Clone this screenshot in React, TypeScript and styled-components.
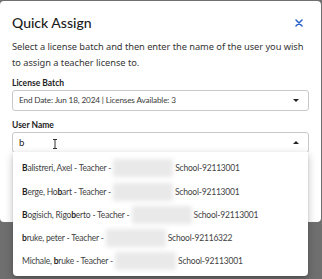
import React from "react";
import styled, { createGlobalStyle } from "styled-components";

const Global = createGlobalStyle`
  html, body { margin: 0; padding: 0; }
  body {
    background: #6f6f6f;
    width: 322px;
    height: 279px;
    overflow: hidden;
    font-family: Lato, "Open Sans", sans-serif;
  }
`;

const Backdrop = styled.div`
  width: 322px;
  height: 279px;
  padding-top: 1px;
  box-sizing: border-box;
  position: relative;
`;

const Dialog = styled.div`
  width: 321px;
  height: 221px;
  background: #ffffff;
  border-radius: 4px;
  box-sizing: border-box;
  padding: 12px 12px 0 12px;
  display: flex;
  flex-direction: column;
`;

const Header = styled.div`
  display: flex;
  align-items: center;
  justify-content: space-between;
  height: 20px;
  padding-right: 6px;
`;

const Title = styled.h2`
  margin: 0;
  font-size: 14px;
  font-weight: 500;
  color: #1b1b1b;
  line-height: 20px;
`;

const CloseButton = styled.button`
  border: 0;
  background: none;
  padding: 0;
  width: 9px;
  height: 9px;
  display: flex;
  align-items: center;
  justify-content: center;
  cursor: pointer;
`;

const Description = styled.p`
  margin: 6px 0 5px 0;
  font-family: "Noto Sans", Lato, sans-serif;
  font-size: 9.3px;
  letter-spacing: -0.05px;
  line-height: 16.3px;
  color: #353535;
`;

const Field = styled.div`
  display: flex;
  flex-direction: column;
  margin-bottom: 8px;
  position: relative;
`;

const Label = styled.label`
  font-size: 8.5px;
  font-weight: 700;
  line-height: 13px;
  color: #222;
`;

const Box = styled.div`
  height: 21px;
  border: 1px solid #c9c9c9;
  border-radius: 3px;
  box-sizing: border-box;
  display: flex;
  align-items: center;
  justify-content: space-between;
  padding: 0 9px 0 6px;
  font-size: 8.2px;
  letter-spacing: -0.15px;
  color: #3a3a3a;
  position: relative;
  background: #fff;
`;

const Caret = styled.span<{ $up?: boolean }>`
  width: 0;
  height: 0;
  border-left: 3px solid transparent;
  border-right: 3px solid transparent;
  ${(p) =>
    p.$up ? "border-bottom: 3.5px solid #222;" : "border-top: 3.5px solid #222;"}
`;

const TypedValue = styled.span`
  color: #222;
  font-size: 9.5px;
`;

const Cursor = styled.svg`
  position: absolute;
  left: 39px;
  top: 6px;
`;

const Menu = styled.ul`
  position: absolute;
  top: 100%;
  left: 0;
  right: 0;
  margin: 0;
  padding: 5px 0 3px 0;
  list-style: none;
  background: #fff;
  border-radius: 0 0 4px 4px;
  box-shadow: 0 3px 8px rgba(0, 0, 0, 0.25), 0 1px 2px rgba(0, 0, 0, 0.12);
  z-index: 2;
`;

const Option = styled.li`
  height: 23.3px;
  display: flex;
  align-items: center;
  padding-left: 9px;
  font-size: 8.5px;
  letter-spacing: -0.2px;
  color: #3f3f3f;
  white-space: nowrap;
`;

const OptionText = styled.span``;

const Match = styled.b`
  font-weight: 700;
  color: #1e1e1e;
`;

const Redacted = styled.span<{ $w: number }>`
  display: inline-block;
  width: ${(p) => p.$w}px;
  height: 18px;
  margin: 0 2px 0 2px;
  background: #e9e9e9;
  filter: blur(2px);
  border-radius: 2px;
`;

type Part = { t: string; b?: boolean };
const options: { parts: Part[]; w: number; school: string }[] = [
  { parts: [{ t: "B", b: true }, { t: "alistreri, Axel - Teacher -" }], w: 60, school: "School-92113001" },
  { parts: [{ t: "B", b: true }, { t: "erge, Ho" }, { t: "b", b: true }, { t: "art - Teacher -" }], w: 60, school: "School-92113001" },
  { parts: [{ t: "B", b: true }, { t: "ogisich, Rigo" }, { t: "b", b: true }, { t: "erto - Teacher -" }], w: 60, school: "School-92113001" },
  { parts: [{ t: "b", b: true }, { t: "ruke, peter - Teacher -" }], w: 60, school: "School-92116322" },
  { parts: [{ t: "Michale, " }, { t: "b", b: true }, { t: "ruke - Teacher -" }], w: 61, school: "School-92113001" },
];

export default function App() {
  return (
    <>
      <Global />
      <Backdrop>
        <Dialog>
          <Header>
            <Title>Quick Assign</Title>
            <CloseButton aria-label="Close">
              <svg width="8" height="8" viewBox="0 0 8 8">
                <path d="M1 1 L7 7 M7 1 L1 7" stroke="#2a63c8" strokeWidth="1.5" strokeLinecap="round" />
              </svg>
            </CloseButton>
          </Header>
          <Description>
            Select a license batch and then enter the name of the user you wish to assign a teacher license to.
          </Description>
          <Field>
            <Label>License Batch</Label>
            <Box>
              <span>End Date: Jun 18, 2024 | Licenses Available: 3</span>
              <Caret />
            </Box>
          </Field>
          <Field>
            <Label>User Name</Label>
            <Box>
              <TypedValue>b</TypedValue>
              <Caret $up />
              <Cursor width="6" height="10" viewBox="0 0 6 10">
                <path d="M1 0.5 H5 M3 0.5 V9.5 M1 9.5 H5" stroke="#333" strokeWidth="1" fill="none" />
              </Cursor>
              <Menu>
                {options.map((o, i) => (
                  <Option key={i}>
                    <OptionText>
                      {o.parts.map((p, j) => (p.b ? <Match key={j}>{p.t}</Match> : <span key={j}>{p.t}</span>))}
                    </OptionText>
                    <Redacted $w={o.w} />
                    <OptionText>{o.school}</OptionText>
                  </Option>
                ))}
              </Menu>
            </Box>
          </Field>
        </Dialog>
      </Backdrop>
    </>
  );
}
